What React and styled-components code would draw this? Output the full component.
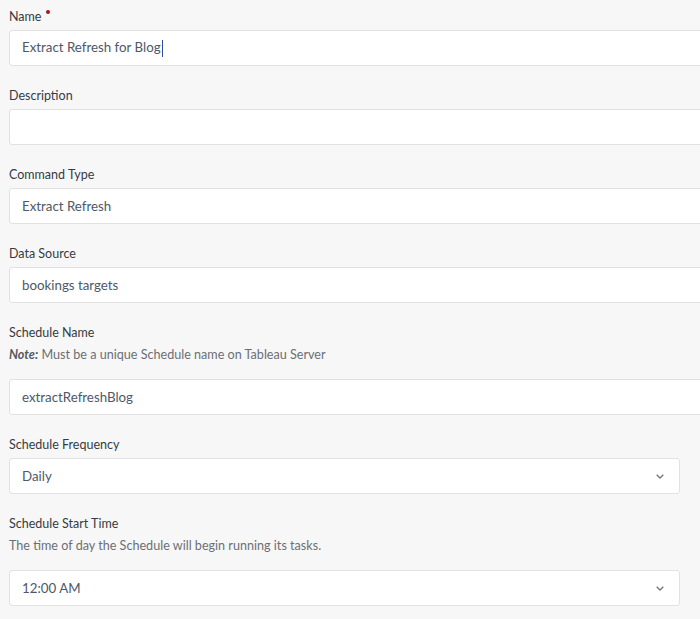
import React from "react";
import styled, { createGlobalStyle } from "styled-components";

const Global = createGlobalStyle`
  html, body { margin: 0; padding: 0; background: #f7f7f7; }
  body { font-family: Lato, "Open Sans", "Liberation Sans", sans-serif; }
`;

const Form = styled.form`
  display: flex;
  flex-direction: column;
  gap: 19px;
  padding: 6px 0 0 9px;
  width: 740px;
  overflow: hidden;
`;

const Field = styled.div`
  display: flex;
  flex-direction: column;
`;

const Label = styled.label`
  font-size: 12.5px;
  line-height: 18px;
  height: 18px;
  padding-top: 2px;
  color: #363b43;
  margin-bottom: ${(p) => (p.$withHelp ? "2px" : "4px")};
  display: flex;
  align-items: flex-start;
  gap: 5px;
`;

const Required = styled.span`
  width: 4px;
  height: 4px;
  border-radius: 50%;
  background: #b0101a;
  margin-top: 2px;
`;

const Help = styled.div`
  font-size: 12.6px;
  line-height: 18px;
  height: 18px;
  padding-top: 2px;
  color: #6b6f75;
  margin-bottom: 15px;
  b { font-style: italic; font-weight: 700; color: #555a61; }
`;

const Box = styled.div`
  box-sizing: border-box;
  height: 36px;
  width: ${(p) => (p.$select ? "671px" : "730px")};
  background: #fff;
  border: 1px solid #e1e1e1;
  border-radius: 3px;
  display: flex;
  align-items: center;
  justify-content: space-between;
  padding: 0 15px 0 12px;
  font-size: 13.3px;
  color: #4d5869;
`;

const Caret = styled.span`
  display: inline-block;
  width: 1px;
  height: 17px;
  background: #2b4f9e;
  vertical-align: middle;
  margin-left: 1px;
`;

const Chevron = () => (
  <svg width="8" height="5" viewBox="0 0 8 5" fill="none">
    <path d="M0.7 0.7L4 4L7.3 0.7" stroke="#6f7680" strokeWidth="1.3" />
  </svg>
);

export default function App() {
  return (
    <>
      <Global />
      <Form>
        <Field>
          <Label>
            Name <Required />
          </Label>
          <Box>
            <span>
              Extract Refresh for Blog
              <Caret />
            </span>
          </Box>
        </Field>
        <Field>
          <Label>Description</Label>
          <Box />
        </Field>
        <Field>
          <Label>Command Type</Label>
          <Box>Extract Refresh</Box>
        </Field>
        <Field>
          <Label>Data Source</Label>
          <Box>bookings targets</Box>
        </Field>
        <Field>
          <Label $withHelp>Schedule Name</Label>
          <Help>
            <b>Note:</b> Must be a unique Schedule name on Tableau Server
          </Help>
          <Box>extractRefreshBlog</Box>
        </Field>
        <Field>
          <Label>Schedule Frequency</Label>
          <Box $select>
            Daily
            <Chevron />
          </Box>
        </Field>
        <Field>
          <Label $withHelp>Schedule Start Time</Label>
          <Help>The time of day the Schedule will begin running its tasks.</Help>
          <Box $select>
            12:00 AM
            <Chevron />
          </Box>
        </Field>
      </Form>
    </>
  );
}
